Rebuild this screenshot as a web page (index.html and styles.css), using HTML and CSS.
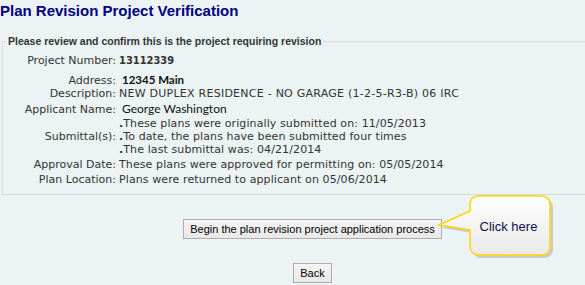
FILE: index.html
```html
<!DOCTYPE html>
<html lang="en">
<head>
  <meta charset="UTF-8" />
  <title>Plan Revision Project Verification</title>
  <link rel="stylesheet" href="styles.css">
</head>
<body>
  <div class="page">

    <!-- title -->
    <h1 class="title">Plan Revision Project Verification</h1>

    <!-- project details -->
    <fieldset class="verify">
      <legend>Please review and confirm this is the project requiring revision</legend>

      <div class="row r-num">
        <span class="label">Project Number:</span>
        <span class="value strong">13112339</span>
      </div>
      <div class="row r-addr">
        <span class="label">Address:</span>
        <span class="value addr">12345 Main</span>
      </div>
      <div class="row r-desc">
        <span class="label">Description:</span>
        <span class="value caps">NEW DUPLEX RESIDENCE - NO GARAGE (1-2-5-R3-B) 06 IRC</span>
      </div>
      <div class="row r-name">
        <span class="label">Applicant Name:</span>
        <span class="value name">George Washington</span>
      </div>
      <div class="row multi">
        <span class="label">Submittal(s):</span>
        <div class="value">
          <div><b>.</b>These plans were originally submitted on: 11/05/2013</div>
          <div><b>.</b>To date, the plans have been submitted four times</div>
          <div><b>.</b>The last submittal was: 04/21/2014</div>
        </div>
      </div>
      <div class="row">
        <span class="label">Approval Date:</span>
        <span class="value">These plans were approved for permitting on: 05/05/2014</span>
      </div>
      <div class="row">
        <span class="label">Plan Location:</span>
        <span class="value">Plans were returned to applicant on 05/06/2014</span>
      </div>
    </fieldset>

    <!-- buttons -->
    <div class="actions">
      <button class="btn">Begin the plan revision project application process</button>
      <button class="btn">Back</button>
    </div>

    <!-- hint bubble -->
    <svg class="callout" width="124" height="70" viewBox="0 0 124 70">
      <defs>
        <linearGradient id="bubbleFill" x1="0" y1="0" x2="0" y2="1">
          <stop offset="0" stop-color="#ffffff" />
          <stop offset="1" stop-color="#e9e9e9" />
        </linearGradient>
      </defs>
      <path transform="translate(3,3)" fill="#cbcbcb"
            d="M42,3 H106 A8,8 0 0 1 114,11 V54 A8,8 0 0 1 106,62 H42 A8,8 0 0 1 34,54 V37 L3,32 L34,18 V11 A8,8 0 0 1 42,3 Z" />
      <path fill="url(#bubbleFill)" stroke="#fcd800" stroke-width="1.5"
            d="M42,3 H106 A8,8 0 0 1 114,11 V54 A8,8 0 0 1 106,62 H42 A8,8 0 0 1 34,54 V37 L3,32 L34,18 V11 A8,8 0 0 1 42,3 Z" />
      <text x="72.5" y="38" text-anchor="middle" class="callout-text">Click here</text>
    </svg>

  </div>
</body>
</html>
```

FILE: styles.css
```css
html, body {
  overflow: hidden;
}

body {
  margin: 0;
  background-color: #ebf3f5;
  color: #333;
  font-family: 'DejaVu Sans', Verdana, sans-serif;
  font-size: 11px;
}

.page {
  position: relative;
  width: 625px;
}

.title {
  margin: 0;
  padding-top: 1px;
  font-family: 'Liberation Sans', Arial, sans-serif;
  font-size: 15px;
  line-height: 20px;
  font-weight: bold;
  color: #000080;
}

/* details box */
.verify {
  margin: 13px 0 0 2px;
  padding: 5px 0 7px 3px;
  border: 1px solid #d6dbde;
  min-width: 0;
}

.verify legend {
  padding: 0 2px;
  font-family: 'Liberation Sans', Arial, sans-serif;
  font-size: 10.5px;
  line-height: 14px;
  font-weight: bold;
  color: #333;
}

.row {
  display: flex;
  align-items: baseline;
  line-height: 13px;
  padding: 1px 0;
}

.row.multi {
  align-items: center;
}

.row.r-addr {
  margin-top: 5px;
  padding: 0;
}

.row.r-desc {
  padding: 0;
}

.row.r-name {
  padding: 2px 0 0;
}

.label {
  width: 110px;
  flex-shrink: 0;
  text-align: right;
}

.value {
  margin-left: 3px;
  white-space: nowrap;
  letter-spacing: 0.1px;
}

.value.caps {
  letter-spacing: 0.25px;
}

.value.strong {
  font-family: 'DejaVu Sans Condensed', 'Liberation Sans', sans-serif;
  font-weight: bold;
  letter-spacing: 0;
}

.value.addr {
  margin-left: 6px;
  font-family: Lato, 'Liberation Sans', sans-serif;
  font-weight: bold;
  font-size: 11.5px;
  letter-spacing: 0;
  color: #111;
}

.value.name {
  margin-left: 6px;
  font-family: Lato, 'Liberation Sans', sans-serif;
  font-size: 12px;
  letter-spacing: 0;
  color: #111;
}

.value b {
  font-weight: bold;
}

/* buttons */
.actions {
  display: flex;
  flex-direction: column;
  align-items: center;
  gap: 24px;
  padding-top: 24px;
}

.btn {
  height: 20px;
  padding: 0 6px;
  font-family: 'Liberation Sans', Arial, sans-serif;
  font-size: 11px;
  color: #000;
  background: linear-gradient(#f5f5f5, #e8e8e8);
  border: 1px solid #adadad;
  border-radius: 0;
  cursor: pointer;
}

/* hint bubble */
.callout {
  position: absolute;
  left: 436px;
  top: 193px;
}

.callout-text {
  font-family: 'Liberation Sans', Arial, sans-serif;
  font-size: 13px;
  fill: #10104a;
}
```
